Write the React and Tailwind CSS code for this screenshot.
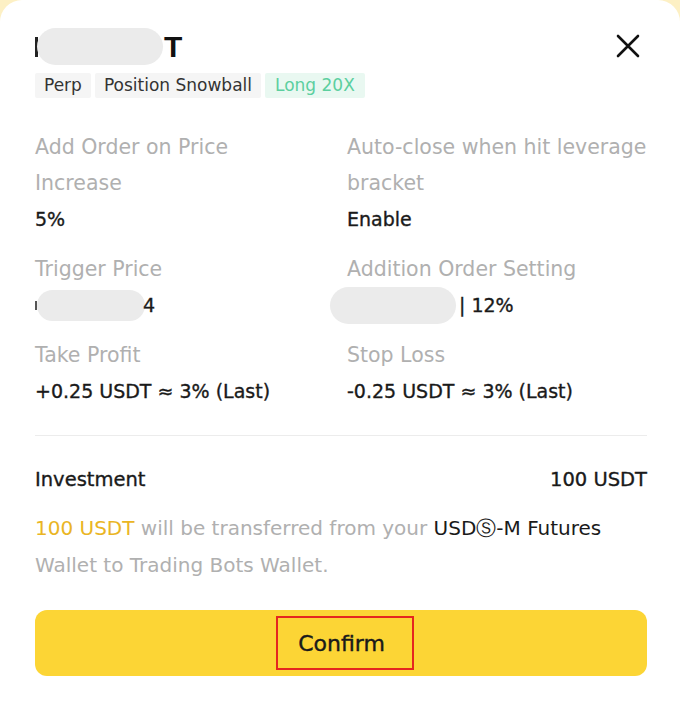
import React from 'react';

const Blob = ({ className }) => (
    <span className={`inline-block rounded-full bg-[#ebebeb] ${className}`} />
);

const details = [
    { label: ['Add Order on Price', 'Increase'], value: <span>5%</span> },
    { label: ['Auto-close when hit leverage', 'bracket'], value: <span>Enable</span> },
    {
        label: ['Trigger Price'],
        value: (
            <span className="flex items-center">
                <span className="inline-block w-[2px] h-[9px] bg-[#555]" />
                <Blob className="w-[108px] h-[31px]" />
                <span className="-ml-[2px]">4</span>
            </span>
        ),
    },
    {
        label: ['Addition Order Setting'],
        value: (
            <span className="flex items-center -ml-[17px]">
                <Blob className="w-[126px] h-[37px]" />
                <span className="ml-[3px]">| 12%</span>
            </span>
        ),
    },
    { label: ['Take Profit'], value: <span>+0.25 USDT ≈ 3% (Last)</span> },
    { label: ['Stop Loss'], value: <span>-0.25 USDT ≈ 3% (Last)</span> },
];

const App = () => {
    return (
        <div className="w-[680px] h-[704px] bg-[#fdf0c4] font-['DejaVu_Sans',sans-serif]">
            <div className="w-full h-full bg-white rounded-t-[22px] pl-[35px] pr-[33px] pt-[28px] flex flex-col">
                {/* Header */}
                <div className="flex items-start justify-between">
                    <div className="flex items-center h-[37px]">
                        <span className="inline-block w-[3px] h-[20px] bg-[#222]" />
                        <Blob className="w-[126px] h-[37px] -ml-[1px]" />
                        <span className="ml-[1px] text-[30px] font-bold text-[#111] font-['Liberation_Sans',sans-serif] leading-none">T</span>
                    </div>
                    <button className="mt-[6px] mr-[7px] w-[24px] h-[24px] text-[#111]">
                        <svg width="24" height="24" viewBox="0 0 24 24" fill="none" stroke="currentColor" strokeWidth="2.6" strokeLinecap="round">
                            <path d="M2 2L22 22M22 2L2 22" />
                        </svg>
                    </button>
                </div>

                {/* Tags */}
                <div className="flex gap-[4px] mt-[8px] text-[17px] leading-[25px]">
                    <span className="px-[9px] rounded-[2px] bg-[#f5f5f5] text-[#333]">Perp</span>
                    <span className="px-[9px] rounded-[2px] bg-[#f5f5f5] text-[#333]">Position Snowball</span>
                    <span className="px-[10px] rounded-[2px] bg-[#e9f8f1] text-[#5ccf9f]">Long 20X</span>
                </div>

                {/* Details grid */}
                <div className="grid grid-cols-2 gap-x-3 gap-y-[14px] mt-[31px]">
                    {details.map((item) => (
                        <div key={item.label[0]} className="flex flex-col">
                            {item.label.map((line) => (
                                <div key={line} className="text-[20.5px] leading-[36px] text-[#b0b0b0] whitespace-nowrap">{line}</div>
                            ))}
                            <div className="h-[36px] flex items-center text-[19px] text-[#1a1a1a] [-webkit-text-stroke:0.35px_#1a1a1a]">
                                {item.value}
                            </div>
                        </div>
                    ))}
                </div>

                <div className="mt-[26px] h-px bg-[#ececec]" />

                {/* Investment */}
                <div className="mt-[26px] flex justify-between text-[19.5px] leading-[36px] text-[#1a1a1a] [-webkit-text-stroke:0.35px_#1a1a1a]">
                    <span>Investment</span>
                    <span>100 USDT</span>
                </div>

                <p className="mt-[12px] text-[20px] leading-[37px] text-[#b0b0b0]">
                    <span className="text-[#eab524]">100 USDT</span> will be transferred from your{' '}
                    <span className="text-[#1a1a1a]">USDⓈ-M Futures</span> Wallet to Trading Bots Wallet.
                </p>

                {/* Confirm */}
                <button className="mt-[26px] h-[66px] w-full rounded-[12px] bg-[#fcd535] flex items-center justify-center">
                    <span className="ml-[8px] h-[54px] pl-[20px] pr-[27px] border-2 border-[#e5261f] flex items-center text-[22px] text-[#1a1a1a] [-webkit-text-stroke:0.4px_#1a1a1a]">
                        Confirm
                    </span>
                </button>
            </div>
        </div>
    );
};

export default App;
